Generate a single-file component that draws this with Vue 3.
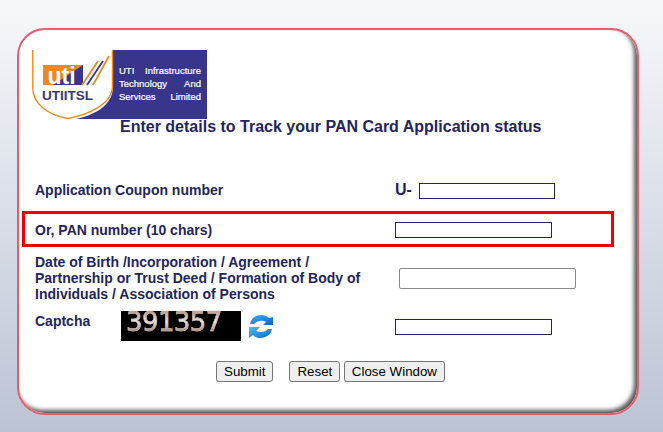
<script setup>
const btns = ['Reset', 'Close Window']
</script>

<template>
  <div class="page">
    <form class="card" @submit.prevent>
      <svg class="logo" width="175" height="69" viewBox="0 0 175 69">
        <path d="M81 0H175V69H44C62 65 81 56 81 36Z" fill="#37358c" />
        <path d="M0 0.500H81" stroke="#8f8dc4" stroke-width="1" />
        <path d="M0.800 0V38C0.800 54 16 65 36 68.500C56 65 80.500 54 80.500 36V0" fill="#fff" stroke="#ee8a1d" stroke-width="1.400" />
        <rect x="11" y="15" width="40" height="20" fill="#ee8a1d" />
        <path d="M21 35L51 15V35Z" fill="#37358c" />
        <path d="M50 35L66 11" stroke="#ee8a1d" stroke-width="1.800" />
        <path d="M55 35L71 11" stroke="#37358c" stroke-width="1.800" />
        <path d="M61 35L77 6" stroke="#ee8a1d" stroke-width="1.800" />
        <text x="15.500" y="33.500" class="uti">uti</text>
        <text x="10" y="50" class="utiitsl">UTIITSL</text>
        <text x="87" y="24" class="tag">UTI</text>
        <text x="169" y="24" class="tag end">Infrastructure</text>
        <text x="87" y="37" class="tag">Technology</text>
        <text x="169" y="37" class="tag end">And</text>
        <text x="87" y="50" class="tag">Services</text>
        <text x="169" y="50" class="tag end">Limited</text>
      </svg>
      <h1 class="title">Enter details to Track your PAN Card Application status</h1>

      <div class="row coupon">
        <label>Application Coupon number</label>
        <div class="field"><span class="prefix">U-</span><input class="inp short" /></div>
      </div>
      <div class="row pan">
        <label>Or, PAN number (10 chars)</label>
        <div class="field"><input class="inp" /></div>
      </div>
      <div class="row dob">
        <label>Date of Birth /Incorporation / Agreement / Partnership or Trust Deed / Formation of Body of Individuals / Association of Persons</label>
        <div class="field"><input class="inp date" /></div>
      </div>
      <div class="row captcha">
        <label>Captcha</label>
        <div class="cap-img"><span>391357</span></div>
        <svg class="refresh" width="26" height="28" viewBox="0 0 26 28">
          <defs>
            <linearGradient id="rfa" x1="0" y1="0" x2="1" y2="1">
              <stop offset="0" stop-color="#3fb2f2" />
              <stop offset="1" stop-color="#0a62c4" />
            </linearGradient>
            <linearGradient id="rfb" x1="0" y1="0" x2="1" y2="1">
              <stop offset="0" stop-color="#4fbcf6" />
              <stop offset="1" stop-color="#0c66cc" />
            </linearGradient>
          </defs>
          <path d="M2 12C3 6 8 3 13 3C16 3 19 4 21 6L25 5V13H15L18 10C15 8 10 8 6 12Z" fill="url(#rfa)" />
          <path d="M24 17C23 23 17 26 12 26C9 26 7 25 5 23L1 26V15H12L8 19C12 21 18 20 20 17Z" fill="url(#rfb)" />
        </svg>
        <div class="field cap-field"><input class="inp" /></div>
      </div>
      <div class="actions">
        <button type="submit" class="btn submit">Submit</button>
        <button v-for="b in btns" :key="b" type="button" class="btn">{{ b }}</button>
      </div>
    </form>
  </div>
</template>

<style>
html, body { margin: 0; }
</style>

<style scoped>
.page {
  width: 663px;
  height: 432px;
  overflow: hidden;
  box-sizing: border-box;
  padding: 28px 0 0 17px;
  background: linear-gradient(#f6f9fb, #bcc3d4);
  font-family: "Liberation Sans", Arial, sans-serif;
}
.card {
  box-sizing: border-box;
  width: 622px;
  height: 387px;
  padding: 20px 0 0 13px;
  background: #fff;
  border: 2px solid #ea5a6b;
  border-radius: 28px;
  box-shadow: inset -3px -3px 4px #555;
}
.logo { display: block; }
.title {
  margin: -1px 0 0 88px;
  font-size: 16px;
  line-height: 18px;
  font-weight: 700;
  color: #23255f;
  white-space: nowrap;
}
.uti { font: 700 23px "Liberation Sans", sans-serif; fill: #fff; }
.utiitsl { font: 700 13.500px "Liberation Sans", sans-serif; fill: #37358c; }
.tag { font: 400 9.500px "Liberation Sans", sans-serif; fill: #fff; stroke: #fff; stroke-width: 0.200px; }
.end { text-anchor: end; }
.row {
  display: flex;
  color: #23255f;
  font-size: 14px;
  line-height: 18px;
  font-weight: 700;
}
.row label { width: 360px; padding-left: 3px; box-sizing: border-box; flex: none; }
.field { display: flex; }
.coupon { margin-top: 45px; height: 30px; }
.prefix { margin-left: 3px; font-size: 16px; width: 24px; }
.inp {
  box-sizing: border-box;
  width: 157px;
  height: 16px;
  padding: 0;
  border: 1px solid #23255f;
  background: #fff;
  outline: none;
}
.short { width: 136px; margin-top: 2px; }
.pan {
  margin: 0 0 0 -10px;
  width: 592px;
  height: 36px;
  box-sizing: border-box;
  border: 3px solid #ee0000;
  align-items: center;
}
.pan label { width: 370px; padding-left: 10px; margin-top: 2px; }
.pan .field { margin-top: 2px; }
.dob { margin-top: 7px; height: 57px; align-items: flex-start; line-height: 16px; }
.dob label { padding-right: 20px; }
.dob .field { margin-left: 7px; margin-top: 14px; }
.date { width: 177px; height: 21px; border: 1px solid #8a8a8a; border-radius: 2px; }
.captcha { height: 32px; align-items: flex-start; }
.captcha label { width: 89px; padding-top: 1px; }
.cap-img {
  width: 120px;
  height: 30px;
  background: #000;
  padding-left: 5px;
  box-sizing: border-box;
  font: 400 26px/20px "DejaVu Sans", sans-serif;
  letter-spacing: -0.600px;
}
.cap-img span {
  display: block;
  padding: 1px 0 3px;
  background: linear-gradient(#b99a8a, #f1e6df 45%, #a78a7a 85%);
  -webkit-background-clip: text;
  background-clip: text;
  color: transparent;
  -webkit-text-stroke: 0.500px #cdb6a8;
}
.refresh { margin: 1px 0 0 7px; flex: none; }
.cap-field { margin: 8px 0 0 121px; }
.actions {
  display: flex;
  margin: 18px 0 0 184px;
  gap: 4px;
}
.btn {
  box-sizing: border-box;
  height: 21px;
  padding: 0 7px;
  font: 400 13.330px "Liberation Sans", Arial, sans-serif;
  color: #000;
  background: #efefef;
  border: 1px solid #767676;
  border-radius: 3px;
}
.btn:last-child { padding: 0 6.500px; }
.submit { margin-right: 12px; }
</style>
